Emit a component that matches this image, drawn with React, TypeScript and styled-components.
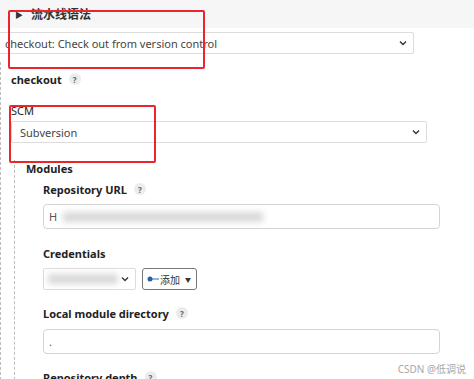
import styled, { createGlobalStyle } from "styled-components";

const GlobalStyle = createGlobalStyle`
  html, body {
    margin: 0;
    padding: 0;
    background: #fff;
  }
  body {
    font-family: "Noto Sans", "Noto Sans CJK SC", sans-serif;
    font-size: 11px;
    color: #333;
  }
`;

const Page = styled.div`
  position: relative;
  width: 474px;
  height: 379px;
  overflow: hidden;
  background: #fff;
`;

const TopBar = styled.div`
  display: flex;
  align-items: center;
  height: 28px;
  padding-left: 15px;
  background: #f6f6f6;
  gap: 8px;
  font-weight: 700;
  font-size: 12px;
  color: #333;
`;

const Caret = styled.span`
  font-size: 8px;
  color: #333;
`;

const Select = styled.div<{ $width: number; $offset?: number; $mt?: number }>`
  display: flex;
  align-items: center;
  justify-content: space-between;
  flex-shrink: 0;
  box-sizing: border-box;
  width: ${(p) => p.$width}px;
  height: 22px;
  margin-top: ${(p) => p.$mt ?? 0}px;
  margin-left: ${(p) => p.$offset ?? 0}px;
  padding: 0 6px 0 8px;
  border: 1px solid #dcdcdc;
  border-radius: 2px;
  background: #fff;
  color: #444;
  font-size: 11px;
`;

const Chevron = () => (
  <svg width="8" height="6" viewBox="0 0 8 6">
    <path d="M1 1.5 L4 4.5 L7 1.5" stroke="#333" strokeWidth="1.4" fill="none" />
  </svg>
);

const Section = styled.div<{ $indent: number; $mt: number; $ml?: number }>`
  display: flex;
  flex-direction: column;
  margin-top: ${(p) => p.$mt}px;
  margin-left: ${(p) => p.$ml ?? 0}px;
  border-left: 1px dashed #bcbcbc;
  padding-left: ${(p) => p.$indent}px;
`;

const Label = styled.div<{ $bold?: boolean; $mt?: number }>`
  display: flex;
  align-items: center;
  gap: 7px;
  height: 16px;
  margin-top: ${(p) => p.$mt ?? 0}px;
  font-weight: ${(p) => (p.$bold ? 700 : 400)};
  color: #222;
  font-size: 11px;
  white-space: nowrap;
`;

const Help = styled.span`
  display: inline-flex;
  align-items: center;
  justify-content: center;
  width: 12px;
  height: 12px;
  border-radius: 50%;
  background: #ececec;
  color: #666;
  font-size: 8px;
  font-weight: 700;
`;

const Fields = styled.div`
  display: flex;
  flex-direction: column;
  margin-left: 17px;
`;

const Input = styled.div<{ $mt: number }>`
  display: flex;
  align-items: center;
  box-sizing: border-box;
  width: 397px;
  height: 25px;
  margin-top: ${(p) => p.$mt}px;
  padding-left: 5px;
  border: 1px solid #d4d4d4;
  border-radius: 4px;
  color: #555;
  font-size: 11px;
`;

const Smudge = styled.span<{ $w: number; $ml: number }>`
  display: inline-block;
  width: ${(p) => p.$w}px;
  height: 10px;
  margin-left: ${(p) => p.$ml}px;
  background: #d8d8d8;
  filter: blur(3px);
`;

const Row = styled.div<{ $mt: number }>`
  display: flex;
  align-items: center;
  gap: 6px;
  margin-top: ${(p) => p.$mt}px;
`;

const AddButton = styled.div`
  display: flex;
  align-items: center;
  flex-shrink: 0;
  gap: 1px;
  box-sizing: border-box;
  width: 55px;
  height: 22px;
  padding-left: 4px;
  border: 1px solid #777;
  border-radius: 3px;
  background: #fff;
  font-size: 10px;
  color: #333;
  white-space: nowrap;
`;

const SmallCaret = styled.span`
  font-size: 6px;
  margin-left: 4px;
`;

const Highlight = styled.div<{ $x: number; $y: number; $w: number; $h: number }>`
  position: absolute;
  left: ${(p) => p.$x}px;
  top: ${(p) => p.$y}px;
  width: ${(p) => p.$w}px;
  height: ${(p) => p.$h}px;
  box-sizing: border-box;
  border: 2px solid #e8262b;
  border-radius: 2px;
  pointer-events: none;
`;

const Watermark = styled.div`
  position: absolute;
  right: 8px;
  bottom: 3px;
  font-size: 10px;
  color: #a8a8a8;
`;

const KeyIcon = () => (
  <svg width="12" height="6" viewBox="0 0 12 6">
    <line x1="4" y1="3" x2="12" y2="3" stroke="#8bb8e8" strokeWidth="2" />
    <circle cx="3" cy="3" r="2.5" fill="#2f5f9e" />
  </svg>
);

export default function App() {
  return (
    <Page>
      <GlobalStyle />
      <TopBar>
        <Caret>▶</Caret>
        <span>流水线语法</span>
      </TopBar>
      <Select $width={418} $offset={-4} $mt={4}>
        <span>checkout: Check out from version control</span>
        <Chevron />
      </Select>
      <Section $indent={10} $mt={8}>
        <Label $bold $mt={9}>
          checkout <Help>?</Help>
        </Label>
        <Label $mt={15}>SCM</Label>
        <Select $width={416} $mt={3}>
          <span>Subversion</span>
          <Chevron />
        </Select>
        <Section $indent={11} $mt={17} $ml={3}>
          <Label $bold>Modules</Label>
          <Fields>
            <Label $bold $mt={5}>
              Repository URL <Help>?</Help>
            </Label>
            <Input $mt={7}>
              <span>H</span>
              <Smudge $w={200} $ml={6} />
            </Input>
            <Label $bold $mt={16}>
              Credentials
            </Label>
            <Row $mt={7}>
              <Select $width={93}>
                <Smudge $w={70} $ml={-4} />
                <Chevron />
              </Select>
              <AddButton>
                <KeyIcon />
                <span>添加</span>
                <SmallCaret>▼</SmallCaret>
              </AddButton>
            </Row>
            <Label $bold $mt={15}>
              Local module directory <Help>?</Help>
            </Label>
            <Input $mt={8}>
              <span>.</span>
            </Input>
            <Label $bold $mt={15}>
              Repository depth <Help>?</Help>
            </Label>
          </Fields>
        </Section>
      </Section>
      <Highlight $x={8} $y={10} $w={197} $h={59} />
      <Highlight $x={9} $y={105} $w={147} $h={58} />
      <Watermark>CSDN @低调说</Watermark>
    </Page>
  );
}
